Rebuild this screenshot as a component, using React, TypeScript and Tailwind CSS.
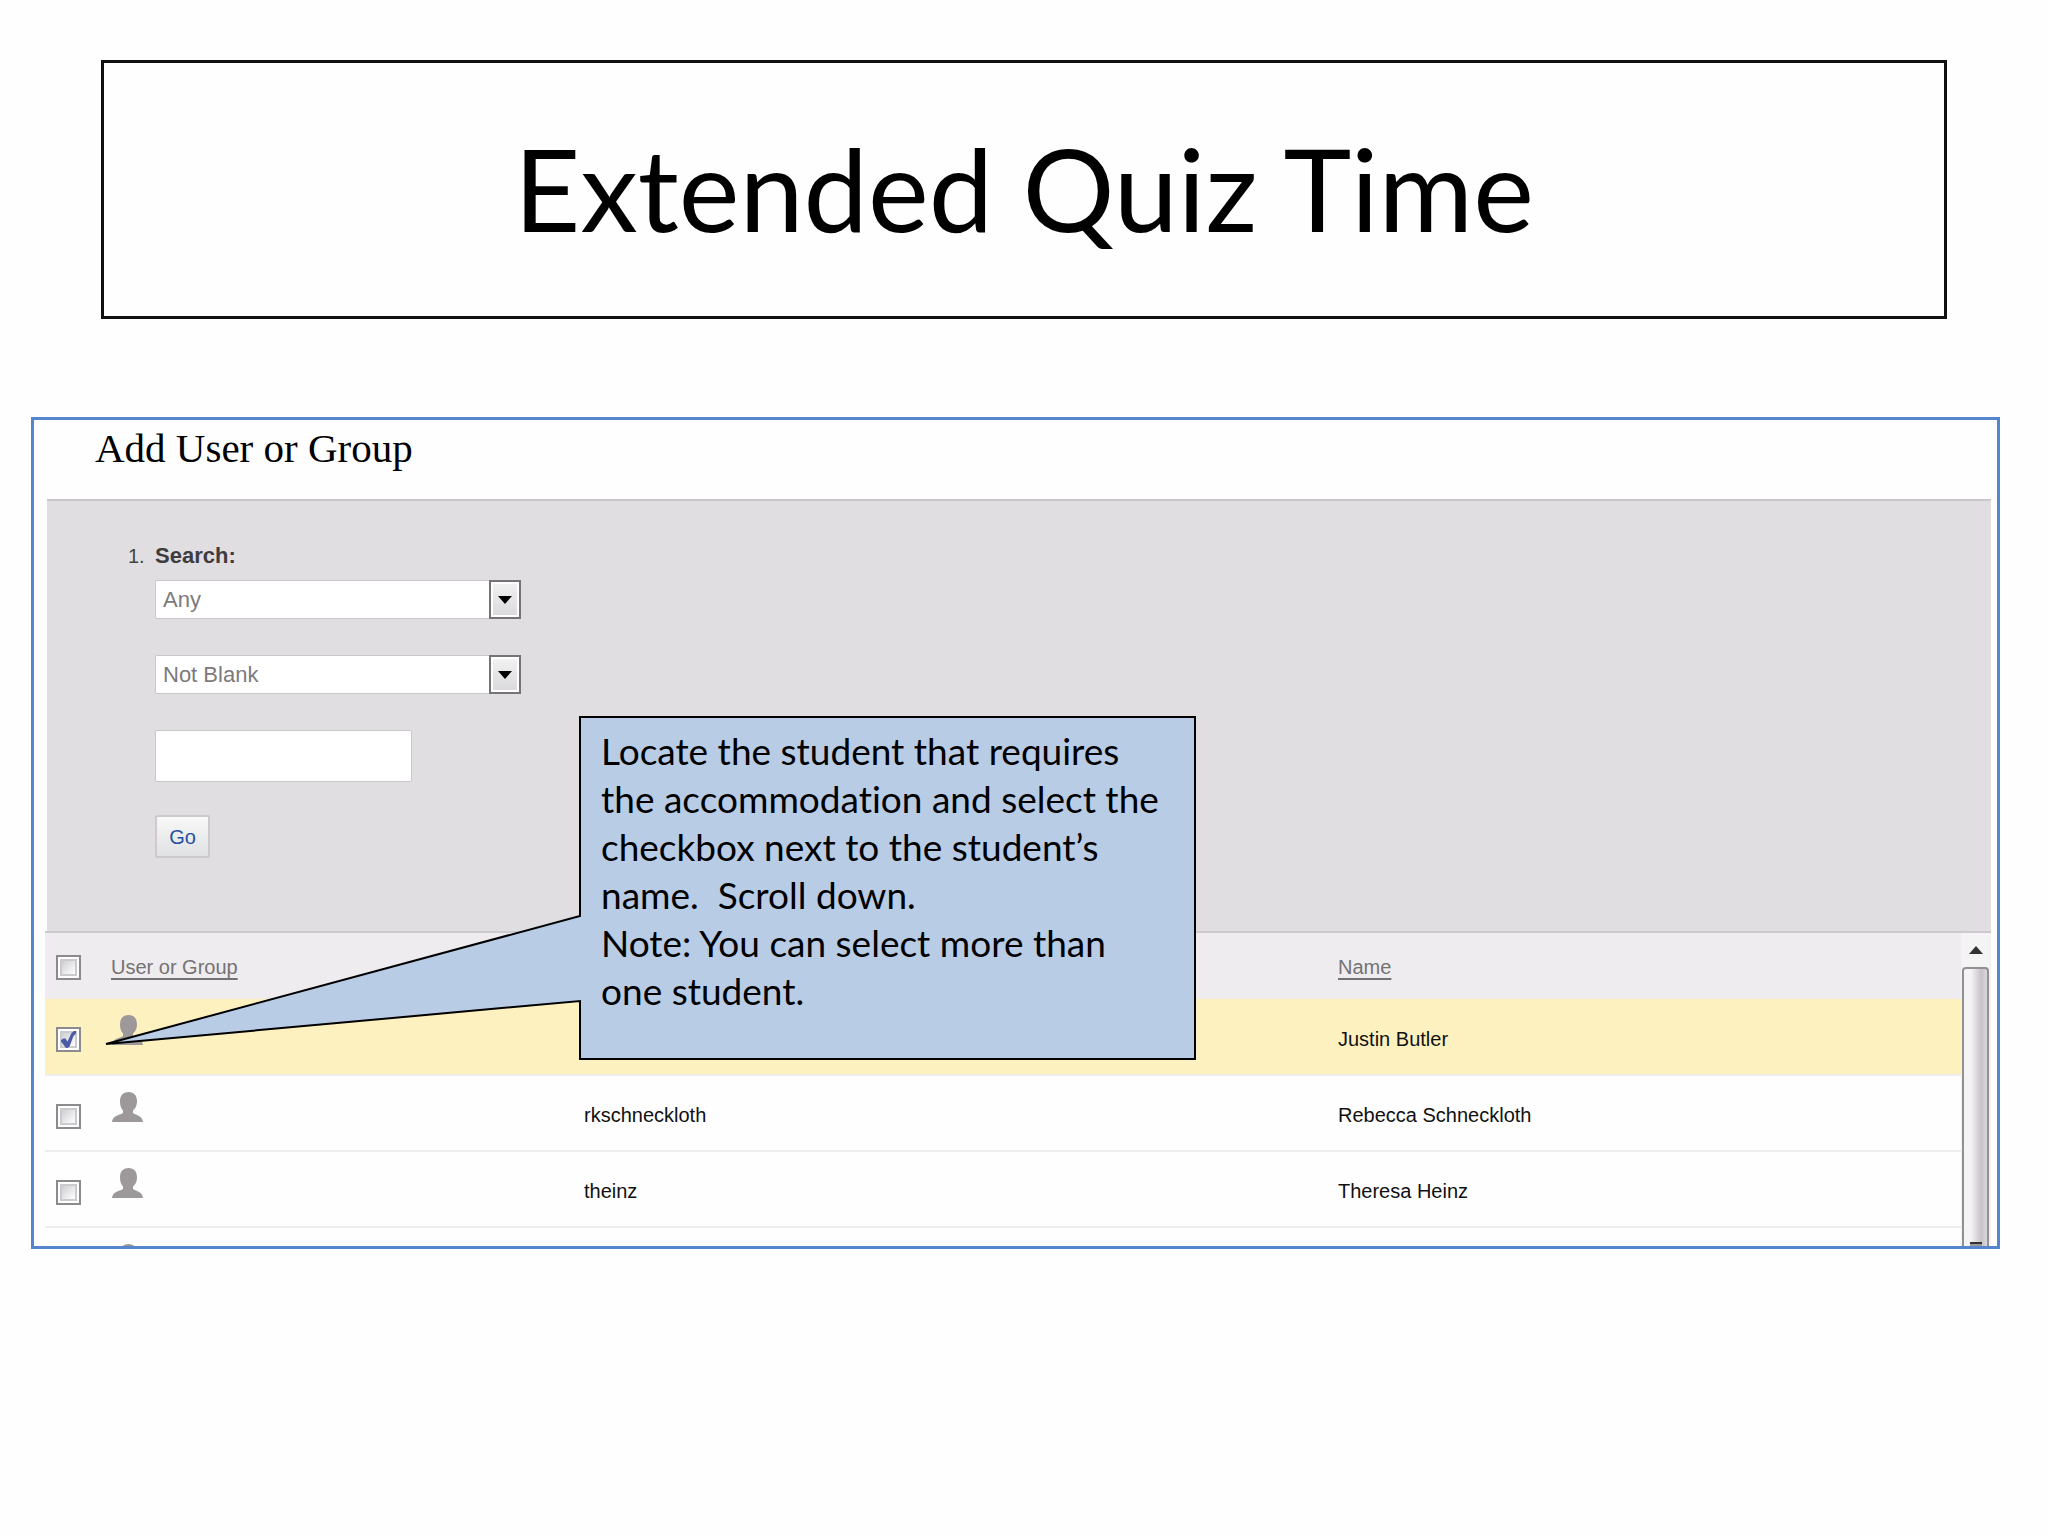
import { useState } from 'react';

type Person = { id: number; username: string; name: string };

const PEOPLE: Person[] = [
  { id: 1, username: '', name: 'Justin Butler' },
  { id: 2, username: 'rkschneckloth', name: 'Rebecca Schneckloth' },
  { id: 3, username: 'theinz', name: 'Theresa Heinz' },
  { id: 4, username: '', name: '' },
];

const NOTE = [
  'Locate the student that requires',
  'the accommodation and select the',
  'checkbox next to the student’s',
  'name.  Scroll down.',
  'Note: You can select more than',
  'one student.',
].join('\n');

function PersonIcon() {
  return (
    <svg viewBox="0 0 31 30" className="block h-[30px] w-[31px] fill-[#9d999b]" aria-hidden="true">
      <path d="M16.500 0C11 0 8 3.500 8 9.500C8 13.500 9 16.500 11 18.500V21C9 22.500 5 23 2.500 25C1 26.300 0.300 28 0 30H31C30.700 28 30 26.300 28.500 25C26 23 23 22.500 21 21V18.500C23.500 16.500 25 13.500 25 9.500C25 3.500 22 0 16.500 0Z" />
    </svg>
  );
}

function CheckBox({ label, checked, onChange }: { label: string; checked: boolean; onChange: () => void }) {
  return (
    <span className="relative block size-[25px]">
      <input
        type="checkbox"
        aria-label={label}
        checked={checked}
        onChange={onChange}
        className="block size-[25px] appearance-none border-2 border-[#8c8a8c] bg-white p-[2px]"
      />
      <span className="pointer-events-none absolute inset-1 border-2 border-[#cbcbcf] bg-linear-to-br from-[#cfcfd3] to-white" />
      {checked && (
        <svg viewBox="0 0 25 25" className="pointer-events-none absolute inset-0" aria-hidden="true">
          <path d="M5 13L7.500 11.500H9.500L11.500 14.500L15.500 6L18 4H20V6.500L17.500 9L13.500 19.500L11.500 21H10L5 14.500Z" fill="#4c5ba6" />
        </svg>
      )}
    </span>
  );
}

function Dropdown({ label, options }: { label: string; options: string[] }) {
  return (
    <div className="relative h-[39px] w-[366px]">
      <select
        aria-label={label}
        className="block h-full w-full appearance-none rounded-xs border border-[#c9c7c9] bg-white pl-[7px] text-[22px] leading-7 text-[#7d7a7d]"
      >
        {options.map((o) => (
          <option key={o}>{o}</option>
        ))}
      </select>
      <span className="pointer-events-none absolute inset-y-0 right-0 flex w-8 items-center justify-center border-2 border-[#767376] bg-linear-to-b from-[#f4f3f4] to-[#d9d8da] inset-ring-2 inset-ring-white">
        <svg viewBox="0 0 14 8" className="h-2 w-[14px]" aria-hidden="true">
          <path d="M0 0H14L7 8Z" fill="#000" />
        </svg>
      </span>
    </div>
  );
}

function Callout() {
  return (
    <div className="pointer-events-none absolute top-[296px] left-[69px] h-[346px] w-[1094px]">
      <svg viewBox="0 0 1094 346" className="absolute inset-0 h-full w-full" aria-hidden="true">
        <path
          d="M477 1H1092V343H477V285L3 328L477 200Z"
          fill="#b8cce6"
          stroke="#000"
          strokeWidth="2"
        />
      </svg>
      <p className="relative ml-[498px] pt-[11px] font-[Lato,sans-serif] text-[37px] leading-[48px] whitespace-pre text-black [font-variant-ligatures:none]">
        {NOTE}
      </p>
    </div>
  );
}

export default function App() {
  const [selected, setSelected] = useState<number[]>([1]);

  const toggle = (id: number) =>
    setSelected((prev) => (prev.includes(id) ? prev.filter((x) => x !== id) : [...prev, id]));
  const allSelected = selected.length === PEOPLE.length;

  return (
    <main className="min-h-screen bg-[#fefefe] pt-[60px] font-['Liberation_Sans',Arial,sans-serif]">
      <header className="mx-[101px] flex h-[259px] items-center justify-center border-3 border-[#111] pb-1">
        <h1 className="font-[Lato,sans-serif] text-[115px] leading-none text-black">Extended Quiz Time</h1>
      </header>

      <section className="relative mt-[98px] mr-12 ml-[31px] border-3 border-[#5585cc] bg-[#fefefe]">
        <h2 className="h-[79px] pt-1 pl-[61px] font-['Liberation_Serif',serif] text-[41px] leading-[48px] text-black">
          Add User or Group
        </h2>

        <form
          onSubmit={(e) => e.preventDefault()}
          className="mr-[6px] ml-[13px] h-[432px] border-t-2 border-[#c9c7c9] bg-[#e0dee0] pt-[39px] pl-[81px]"
        >
          <div className="flex items-baseline">
            <span className="w-[27px] text-[20px] leading-8 text-[#444]">1.</span>
            <span className="text-[22px] leading-8 font-bold text-[#3f3c3f]">Search:</span>
          </div>
          <div className="mt-2 ml-[27px] flex flex-col items-start">
            <Dropdown label="Search field" options={['Any', 'Username', 'Name']} />
            <div className="h-9" />
            <Dropdown label="Search condition" options={['Not Blank', 'Contains', 'Equal to']} />
            <input
              type="text"
              aria-label="Search text"
              className="mt-9 h-[52px] w-[257px] rounded-xs border border-[#c9c7c9] bg-white px-2 text-[22px]"
            />
            <button
              type="submit"
              className="mt-[33px] h-[43px] w-[55px] rounded-xs border-2 border-[#cccacc] bg-linear-to-b from-[#f8f8f8] to-[#e0e1e3] text-[20px] text-[#2552a0]"
            >
              Go
            </button>
          </div>
        </form>

        <div className="mr-[6px] ml-[11px] flex h-[315px] overflow-hidden border-t-2 border-[#cccacc]">
          <div className="min-w-0 flex-1">
            <table className="w-full table-fixed border-collapse text-left text-[20px]">
              <thead>
                <tr className="h-[66px] bg-[#eeecee] text-[#757275]">
                  <th className="w-[66px] pt-[2px] pl-[11px]">
                    <CheckBox
                      label="Select all"
                      checked={allSelected}
                      onChange={() => setSelected(allSelected ? [] : PEOPLE.map((p) => p.id))}
                    />
                  </th>
                  <th className="w-[473px] pt-[2px] font-normal">
                    <a href="#user" className="underline underline-offset-4">User or Group</a>
                  </th>
                  <th className="w-[754px]" aria-label="Username" />
                  <th className="pt-[2px] font-normal">
                    <a href="#name" className="underline underline-offset-4">Name</a>
                  </th>
                </tr>
              </thead>
              <tbody>
                {PEOPLE.map((p) => (
                  <tr
                    key={p.id}
                    className={`h-[76px] border-b-2 border-[#efedef] text-[#111] ${selected.includes(p.id) ? 'bg-[#fef1c0]' : ''}`}
                  >
                    <td className="pt-[6px] pl-[11px]">
                      <CheckBox label={p.name || 'Select user'} checked={selected.includes(p.id)} onChange={() => toggle(p.id)} />
                    </td>
                    <td className="pt-4 pl-px align-top">
                      <PersonIcon />
                    </td>
                    <td className="pt-1">{p.username}</td>
                    <td className="pt-1">{p.name}</td>
                  </tr>
                ))}
              </tbody>
            </table>
          </div>

          <div className="flex w-[30px] flex-col bg-[#f3f1f1] pr-[2px] pl-px">
            <button type="button" aria-label="Scroll up" className="flex h-[34px] shrink-0 items-center justify-center bg-[#f5f4f5]">
              <svg viewBox="0 0 14 8" className="h-2 w-[14px]" aria-hidden="true">
                <path d="M7 0L14 8H0Z" fill="#333" />
              </svg>
            </button>
            <div className="flex flex-1 items-end justify-center rounded-t-sm border-2 border-b-0 border-[#929094] bg-linear-to-r from-[#f5f4f5] from-30% via-[#c5c3c6] via-75% to-[#dad8da]">
              <span className="h-1 w-3 border-t-2 border-[#333] bg-[#999]" />
            </div>
          </div>
        </div>

        <Callout />
      </section>
    </main>
  );
}
